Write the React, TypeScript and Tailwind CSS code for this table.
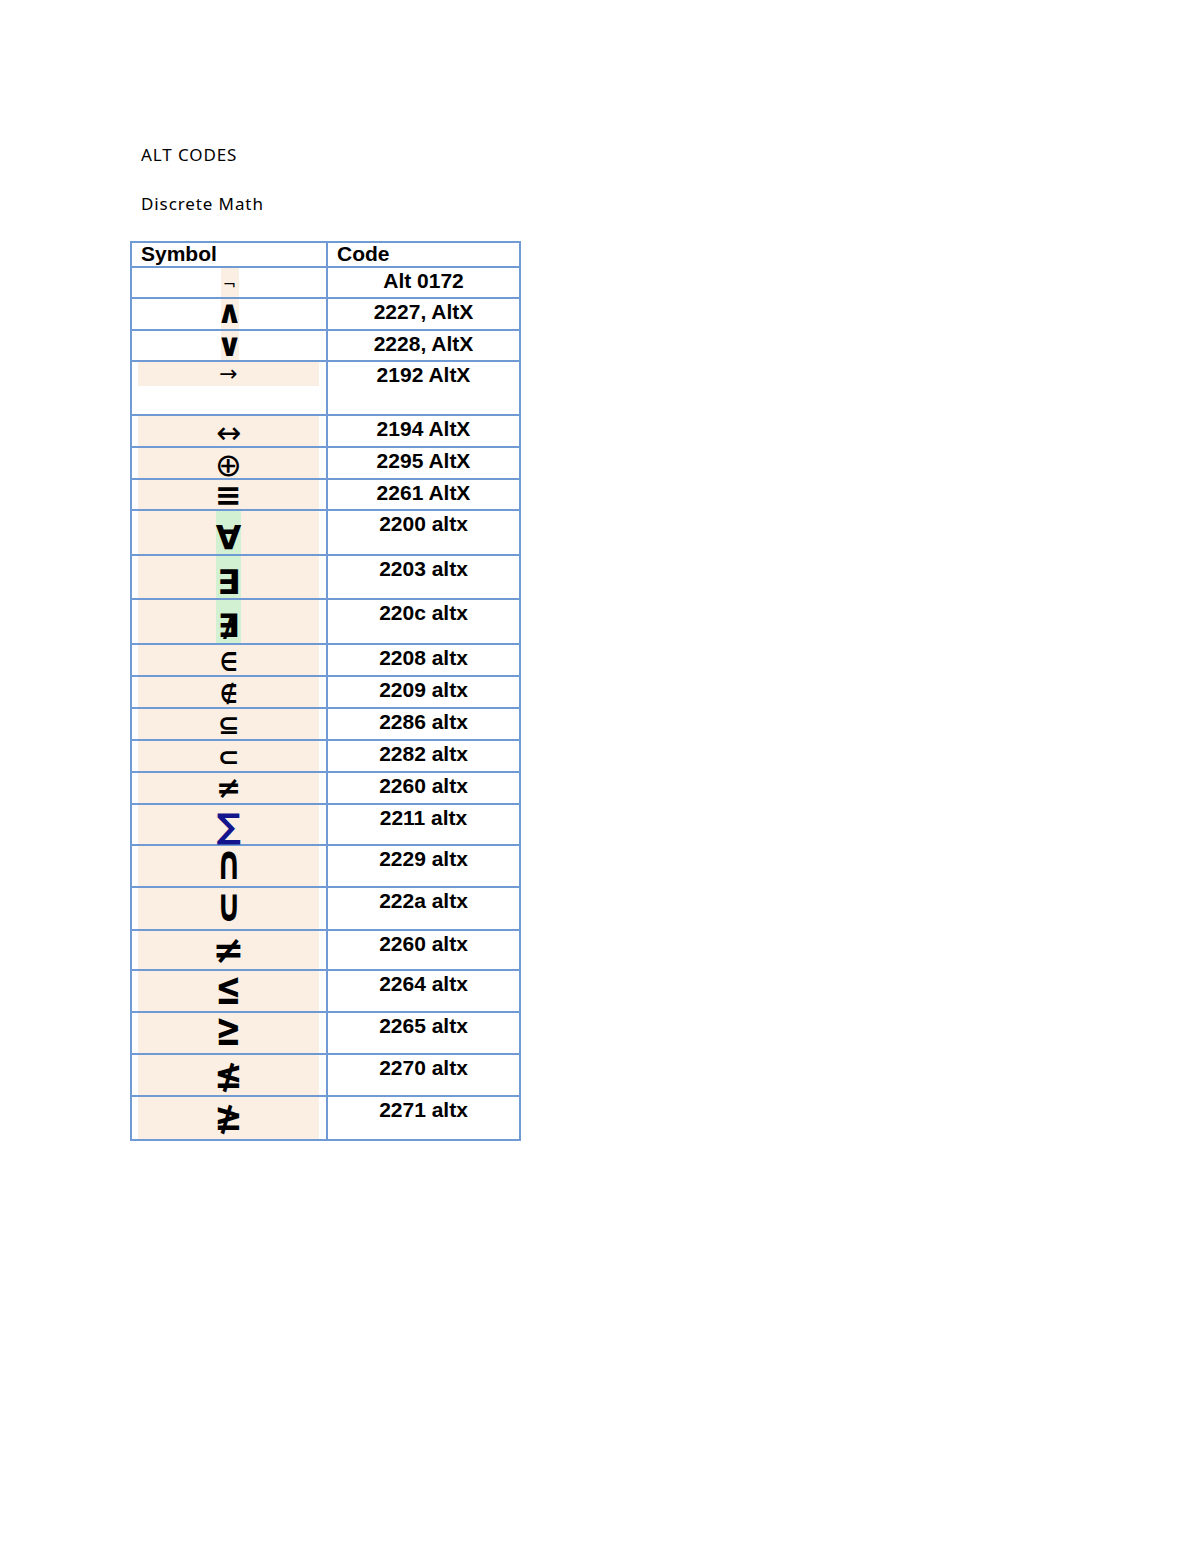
import React from "react";

type Shade = "none" | "narrow" | "full" | "arrow" | "green";

type Row = {
  sym: string;
  code: string;
  h: string;
  sz: string;
  mt: string;
  bold: boolean;
  shade: Shade;
  tx?: string;
  navy?: boolean;
  slash?: boolean;
};

const rows: Row[] = [
  { sym: "¬", code: "Alt 0172", h: "h-[31px]", sz: "text-[16px]", mt: "mt-[9px]", bold: false, shade: "narrow" },
  { sym: "∧", code: "2227, AltX", h: "h-[32px]", sz: "text-[32px]", mt: "-mt-[3px]", bold: true, shade: "narrow" },
  { sym: "∨", code: "2228, AltX", h: "h-[31px]", sz: "text-[32px]", mt: "-mt-[2px]", bold: true, shade: "narrow" },
  { sym: "→", code: "2192 AltX", h: "h-[54px]", sz: "text-[22px]", mt: "mt-[1px]", bold: false, shade: "arrow" },
  { sym: "↔", code: "2194 AltX", h: "h-[32px]", sz: "text-[30px]", mt: "mt-[2px]", bold: false, shade: "full" },
  { sym: "⊕", code: "2295 AltX", h: "h-[32px]", sz: "text-[32px]", mt: "mt-[1px]", bold: false, shade: "full" },
  { sym: "≡", code: "2261 AltX", h: "h-[31px]", sz: "text-[32px]", mt: "-mt-[1px]", bold: true, shade: "full" },
  { sym: "∀", code: "2200 altx", h: "h-[45px]", sz: "text-[33px]", mt: "mt-[10px]", bold: true, shade: "green" },
  { sym: "∃", code: "2203 altx", h: "h-[44px]", sz: "text-[34px]", mt: "mt-[9px]", bold: true, shade: "green" },
  { sym: "∃", code: "220c altx", h: "h-[45px]", sz: "text-[32px]", mt: "mt-[10px]", bold: true, shade: "green", slash: true },
  { sym: "∈", code: "2208 altx", h: "h-[32px]", sz: "text-[26px]", mt: "mt-[4px]", bold: true, shade: "full", tx: "scale-x-75" },
  { sym: "∉", code: "2209 altx", h: "h-[32px]", sz: "text-[26px]", mt: "mt-[4px]", bold: true, shade: "full", tx: "scale-x-75" },
  { sym: "⊆", code: "2286 altx", h: "h-[32px]", sz: "text-[26px]", mt: "mt-[3px]", bold: true, shade: "full" },
  { sym: "⊂", code: "2282 altx", h: "h-[32px]", sz: "text-[26px]", mt: "mt-[3px]", bold: true, shade: "full" },
  { sym: "≠", code: "2260 altx", h: "h-[32px]", sz: "text-[30px]", mt: "mt-0", bold: true, shade: "full" },
  { sym: "∑", code: "2211 altx", h: "h-[41px]", sz: "text-[34px]", mt: "mt-[4px]", bold: true, shade: "full", navy: true },
  { sym: "∩", code: "2229 altx", h: "h-[42px]", sz: "text-[34px]", mt: "mt-[6px]", bold: true, shade: "full", tx: "origin-bottom scale-y-140 scale-x-90" },
  { sym: "∪", code: "222a altx", h: "h-[43px]", sz: "text-[34px]", mt: "mt-[6px]", bold: true, shade: "full", tx: "origin-bottom scale-y-135 scale-x-90" },
  { sym: "≠", code: "2260 altx", h: "h-[40px]", sz: "text-[38px]", mt: "mt-0", bold: true, shade: "full" },
  { sym: "≤", code: "2264 altx", h: "h-[42px]", sz: "text-[34px]", mt: "mt-[6px]", bold: true, shade: "full", tx: "origin-bottom scale-y-135 scale-x-90" },
  { sym: "≥", code: "2265 altx", h: "h-[42px]", sz: "text-[34px]", mt: "mt-[5px]", bold: true, shade: "full", tx: "origin-bottom scale-y-135 scale-x-90" },
  { sym: "≰", code: "2270 altx", h: "h-[42px]", sz: "text-[34px]", mt: "mt-[5px]", bold: true, shade: "full", tx: "origin-bottom scale-y-115" },
  { sym: "≱", code: "2271 altx", h: "h-[42px]", sz: "text-[34px]", mt: "mt-[5px]", bold: true, shade: "full", tx: "origin-bottom scale-y-115" },
];

const BORDER = "border-[#6f9ad4]";

function Glyph({ r }: { r: Row }) {
  return (
    <span
      className={`relative inline-block ${r.sz} ${r.mt} ${r.tx ?? ""} ${r.bold ? "font-bold" : "font-normal"} ${
        r.navy ? "text-[#14148c]" : "text-black"
      } leading-none`}
      style={{ fontFamily: '"DejaVu Sans", sans-serif' }}
    >
      {r.sym}
      {r.slash ? (
        <span className="absolute inset-0 flex items-center justify-center text-[30px] font-bold leading-none">
          /
        </span>
      ) : null}
    </span>
  );
}

function SymbolCell({ r }: { r: Row }) {
  const cell = `h-full w-[196px] shrink-0 border-r-2 ${BORDER}`;
  if (r.shade === "narrow") {
    return (
      <div className={`${cell} flex justify-center pl-[1px]`}>
        <div className="flex h-full w-[18px] items-start justify-center bg-[#fbeee3]">
          <Glyph r={r} />
        </div>
      </div>
    );
  }
  if (r.shade === "arrow") {
    return (
      <div className={`${cell} pl-[6px] pr-[7px]`}>
        <div className="flex h-[24px] items-start justify-center bg-[#fbeee3]">
          <Glyph r={r} />
        </div>
      </div>
    );
  }
  if (r.shade === "green") {
    return (
      <div className={`${cell} pl-[6px] pr-[7px]`}>
        <div className="flex h-full justify-center bg-[#fbeee3]">
          <div className="flex h-full w-[25px] items-start justify-center bg-[#d2f0d2]">
            <Glyph r={r} />
          </div>
        </div>
      </div>
    );
  }
  return (
    <div className={`${cell} pl-[6px] pr-[7px]`}>
      <div className="flex h-full items-start justify-center bg-[#fbeee3]">
        <Glyph r={r} />
      </div>
    </div>
  );
}

export default function App() {
  return (
    <div className="min-h-[1553px] w-[1200px] bg-white pt-[143px]">
      <div
        className="pl-[141px] text-[17px] leading-[24px] tracking-[0.9px] text-black"
        style={{ fontFamily: '"Noto Sans", "Open Sans", sans-serif' }}
      >
        <p>ALT CODES</p>
        <p className="mt-[25px]">Discrete Math</p>
      </div>

      <div
        className={`ml-[130px] mt-[25px] w-[391px] border-2 ${BORDER} text-black`}
        style={{ fontFamily: '"Liberation Sans", Arial, sans-serif' }}
      >
        <div className={`flex h-[25px] border-b-2 ${BORDER} text-[21px] font-bold leading-[22px]`}>
          <div className={`h-full w-[196px] shrink-0 border-r-2 ${BORDER} pl-[9px]`}>Symbol</div>
          <div className="pl-[9px]">Code</div>
        </div>
        {rows.map((r, i) => (
          <div key={i} className={`flex ${r.h} ${i < rows.length - 1 ? `border-b-2 ${BORDER}` : ""}`}>
            <SymbolCell r={r} />
            <div className="flex-1 pt-[2px] text-center text-[21px] font-bold leading-[22px]">{r.code}</div>
          </div>
        ))}
      </div>
    </div>
  );
}
